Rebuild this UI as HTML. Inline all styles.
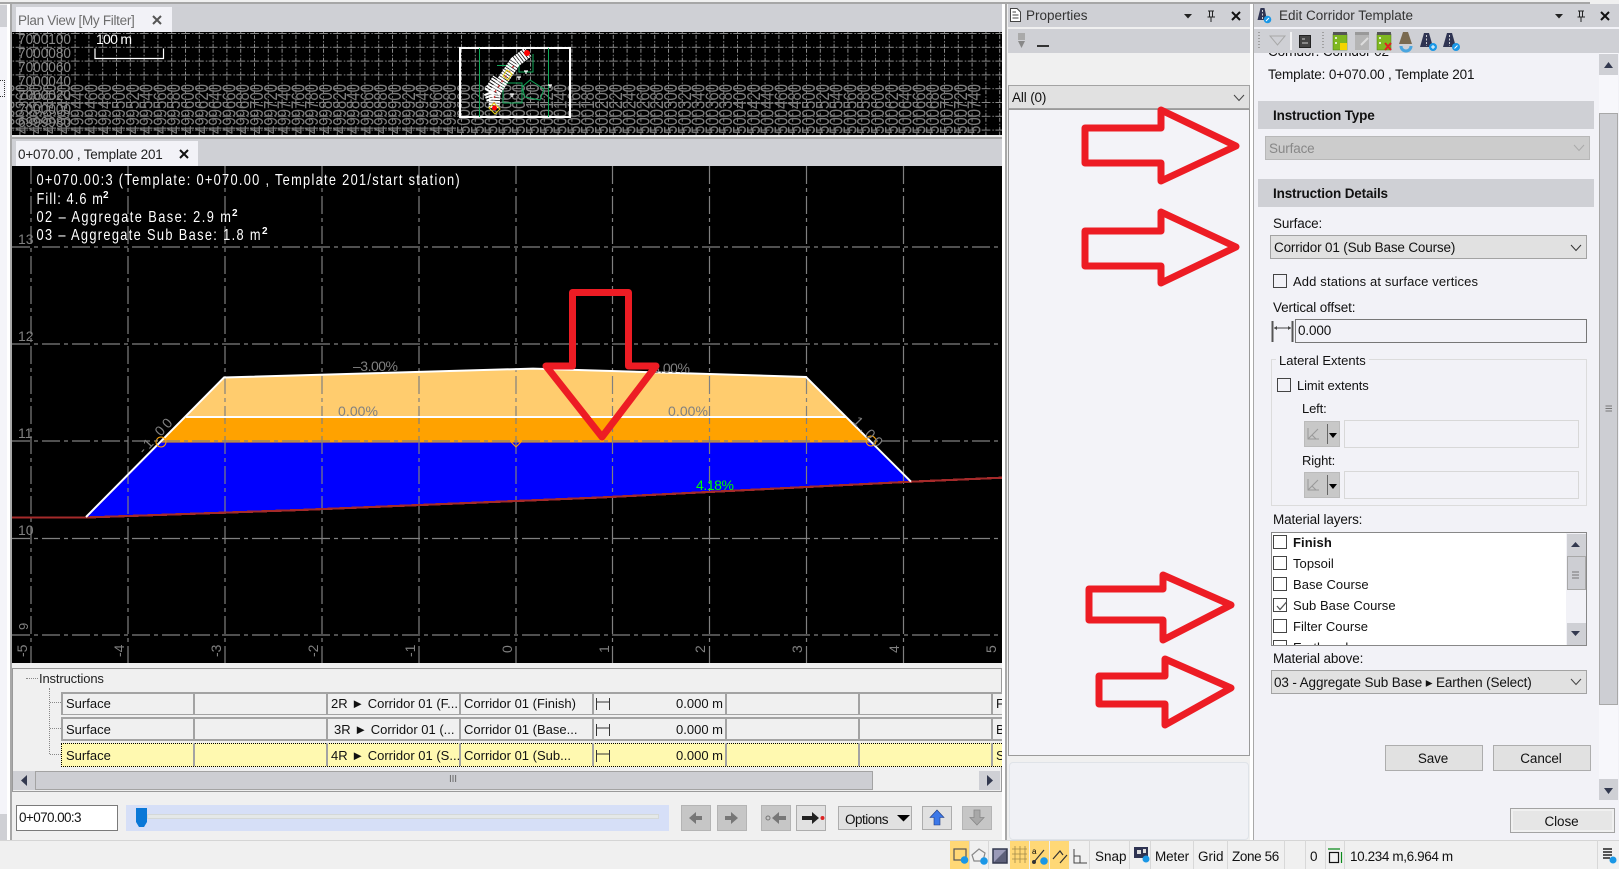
<!DOCTYPE html>
<html><head><meta charset="utf-8"><style>
*{box-sizing:border-box}
html,body{margin:0;padding:0}
body{width:1619px;height:869px;overflow:hidden;position:relative;background:#f0f0f0;font-family:"Liberation Sans",sans-serif;font-size:13.5px;color:#111}
.b{position:absolute}
.t{position:absolute;white-space:nowrap;line-height:16px;letter-spacing:-.14px}
.hd{position:absolute;background:#cfd0d5;font-weight:bold;font-size:13.5px;line-height:30px;padding-left:15px;color:#111;letter-spacing:-.15px}
.cb{position:absolute;background:#e1e1e1;border:1px solid #a3a3a3;line-height:24px;padding-left:3px;white-space:nowrap;letter-spacing:-.14px}
.ck{position:absolute;width:14px;height:14px;border:1px solid #444;background:#fff}
.btn{position:absolute;background:#e1e1e1;border:1px solid #adadad;text-align:center;line-height:26px;letter-spacing:-.1px;padding-right:2px}
.sq{position:absolute;background:#c6c6c6;border:1px solid #b4b4b4}
.row{position:absolute;left:61px;width:941px;height:24px;background:#f0f0f0;border:2px solid #a3a3a3;border-right:0}
.v{position:absolute;top:692px;width:2px;background:#a3a3a3}
.rt{position:absolute;white-space:nowrap;line-height:16px;font-size:13px}
.sep{position:absolute;top:840px;height:29px;width:1px;background:#d8d8d8}
.y{position:absolute;top:841px;height:28px;width:19px;background:#ffd876}
svg{position:absolute;overflow:visible}
svg text{font-family:"Liberation Sans",sans-serif}
.lst{font-size:13px;letter-spacing:.05px}
.st{letter-spacing:-.38px}
</style></head><body>

<!-- top line and backgrounds -->
<div class="b" style="left:0;top:2px;width:1590px;height:2px;background:#a6a6a6"></div>
<div class="b" style="left:0;top:5px;width:7px;height:22px;background:#cfd0d5"></div>
<div class="b" style="left:0;top:27px;width:7px;height:787px;background:#f4f4f9"></div>
<div class="b" style="left:0;top:814px;width:7px;height:26px;background:#cfd0d5"></div>
<div class="b" style="left:7px;top:4px;width:3px;height:836px;background:#fff"></div>
<div class="b" style="left:10px;top:4px;width:2px;height:836px;background:#a8a8a8"></div>
<div class="b" style="left:0;top:80px;width:5px;height:17px;border:1px dotted #333;border-left:0"></div>

<!-- plan tab strip -->
<div class="b" style="left:12px;top:4px;width:990px;height:28px;background:#cfd0d5"></div>
<div class="b" style="left:16px;top:7px;width:156px;height:25px;background:#f2f2f7"></div>
<div class="t" style="left:18px;top:13px;color:#6d6d6d;font-size:13.5px;letter-spacing:-.3px">Plan View [My Filter]</div>
<svg style="left:152px;top:15px" width="10" height="10"><path d="M1 1L9 9M9 1L1 9" stroke="#555" stroke-width="2"/></svg>

<!-- plan canvas -->
<svg style="left:12px;top:32px;overflow:hidden" width="990" height="103" viewBox="12 32 990 103">
<defs><pattern id="g" x="5.6" y="33" width="13.8" height="13.8" patternUnits="userSpaceOnUse">
<path d="M0 .5H5M7 .5H8.5M10 .5H13.8M.5 2V6M.5 8V9.5M.5 11V13.8" stroke="#8a8a8a" stroke-width="1" fill="none"/></pattern></defs>
<rect x="12" y="32" width="990" height="103" fill="#000"/>
<rect x="12" y="32" width="990" height="103" fill="url(#g)"/>
<g fill="#7c7c7c" font-size="18">
<text transform="translate(14.6,134) rotate(-90)" textLength="50" lengthAdjust="spacingAndGlyphs">499340</text>
<text transform="translate(28.4,134) rotate(-90)" textLength="50" lengthAdjust="spacingAndGlyphs">499360</text>
<text transform="translate(42.2,134) rotate(-90)" textLength="50" lengthAdjust="spacingAndGlyphs">499380</text>
<text transform="translate(56,134) rotate(-90)" textLength="50" lengthAdjust="spacingAndGlyphs">499400</text>
<text transform="translate(69.8,134) rotate(-90)" textLength="50" lengthAdjust="spacingAndGlyphs">499420</text>
<text transform="translate(83.6,134) rotate(-90)" textLength="50" lengthAdjust="spacingAndGlyphs">499440</text>
<text transform="translate(97.4,134) rotate(-90)" textLength="50" lengthAdjust="spacingAndGlyphs">499460</text>
<text transform="translate(111.2,134) rotate(-90)" textLength="50" lengthAdjust="spacingAndGlyphs">499480</text>
<text transform="translate(125,134) rotate(-90)" textLength="50" lengthAdjust="spacingAndGlyphs">499500</text>
<text transform="translate(138.8,134) rotate(-90)" textLength="50" lengthAdjust="spacingAndGlyphs">499520</text>
<text transform="translate(152.6,134) rotate(-90)" textLength="50" lengthAdjust="spacingAndGlyphs">499540</text>
<text transform="translate(166.4,134) rotate(-90)" textLength="50" lengthAdjust="spacingAndGlyphs">499560</text>
<text transform="translate(180.2,134) rotate(-90)" textLength="50" lengthAdjust="spacingAndGlyphs">499580</text>
<text transform="translate(194,134) rotate(-90)" textLength="50" lengthAdjust="spacingAndGlyphs">499600</text>
<text transform="translate(207.8,134) rotate(-90)" textLength="50" lengthAdjust="spacingAndGlyphs">499620</text>
<text transform="translate(221.6,134) rotate(-90)" textLength="50" lengthAdjust="spacingAndGlyphs">499640</text>
<text transform="translate(235.4,134) rotate(-90)" textLength="50" lengthAdjust="spacingAndGlyphs">499660</text>
<text transform="translate(249.2,134) rotate(-90)" textLength="50" lengthAdjust="spacingAndGlyphs">499680</text>
<text transform="translate(263,134) rotate(-90)" textLength="50" lengthAdjust="spacingAndGlyphs">499700</text>
<text transform="translate(276.8,134) rotate(-90)" textLength="50" lengthAdjust="spacingAndGlyphs">499720</text>
<text transform="translate(290.6,134) rotate(-90)" textLength="50" lengthAdjust="spacingAndGlyphs">499740</text>
<text transform="translate(304.4,134) rotate(-90)" textLength="50" lengthAdjust="spacingAndGlyphs">499760</text>
<text transform="translate(318.2,134) rotate(-90)" textLength="50" lengthAdjust="spacingAndGlyphs">499780</text>
<text transform="translate(332,134) rotate(-90)" textLength="50" lengthAdjust="spacingAndGlyphs">499800</text>
<text transform="translate(345.8,134) rotate(-90)" textLength="50" lengthAdjust="spacingAndGlyphs">499820</text>
<text transform="translate(359.6,134) rotate(-90)" textLength="50" lengthAdjust="spacingAndGlyphs">499840</text>
<text transform="translate(373.4,134) rotate(-90)" textLength="50" lengthAdjust="spacingAndGlyphs">499860</text>
<text transform="translate(387.2,134) rotate(-90)" textLength="50" lengthAdjust="spacingAndGlyphs">499880</text>
<text transform="translate(401,134) rotate(-90)" textLength="50" lengthAdjust="spacingAndGlyphs">499900</text>
<text transform="translate(414.8,134) rotate(-90)" textLength="50" lengthAdjust="spacingAndGlyphs">499920</text>
<text transform="translate(428.6,134) rotate(-90)" textLength="50" lengthAdjust="spacingAndGlyphs">499940</text>
<text transform="translate(442.4,134) rotate(-90)" textLength="50" lengthAdjust="spacingAndGlyphs">499960</text>
<text transform="translate(456.2,134) rotate(-90)" textLength="50" lengthAdjust="spacingAndGlyphs">499980</text>
<text transform="translate(470,134) rotate(-90)" textLength="50" lengthAdjust="spacingAndGlyphs">500000</text>
<text transform="translate(483.8,134) rotate(-90)" textLength="50" lengthAdjust="spacingAndGlyphs">500020</text>
<text transform="translate(497.6,134) rotate(-90)" textLength="50" lengthAdjust="spacingAndGlyphs">500040</text>
<text transform="translate(511.4,134) rotate(-90)" textLength="50" lengthAdjust="spacingAndGlyphs">500060</text>
<text transform="translate(525.2,134) rotate(-90)" textLength="50" lengthAdjust="spacingAndGlyphs">500080</text>
<text transform="translate(539,134) rotate(-90)" textLength="50" lengthAdjust="spacingAndGlyphs">500100</text>
<text transform="translate(552.8,134) rotate(-90)" textLength="50" lengthAdjust="spacingAndGlyphs">500120</text>
<text transform="translate(566.6,134) rotate(-90)" textLength="50" lengthAdjust="spacingAndGlyphs">500140</text>
<text transform="translate(580.4,134) rotate(-90)" textLength="50" lengthAdjust="spacingAndGlyphs">500160</text>
<text transform="translate(594.2,134) rotate(-90)" textLength="50" lengthAdjust="spacingAndGlyphs">500180</text>
<text transform="translate(608,134) rotate(-90)" textLength="50" lengthAdjust="spacingAndGlyphs">500200</text>
<text transform="translate(621.8,134) rotate(-90)" textLength="50" lengthAdjust="spacingAndGlyphs">500220</text>
<text transform="translate(635.6,134) rotate(-90)" textLength="50" lengthAdjust="spacingAndGlyphs">500240</text>
<text transform="translate(649.4,134) rotate(-90)" textLength="50" lengthAdjust="spacingAndGlyphs">500260</text>
<text transform="translate(663.2,134) rotate(-90)" textLength="50" lengthAdjust="spacingAndGlyphs">500280</text>
<text transform="translate(677,134) rotate(-90)" textLength="50" lengthAdjust="spacingAndGlyphs">500300</text>
<text transform="translate(690.8,134) rotate(-90)" textLength="50" lengthAdjust="spacingAndGlyphs">500320</text>
<text transform="translate(704.6,134) rotate(-90)" textLength="50" lengthAdjust="spacingAndGlyphs">500340</text>
<text transform="translate(718.4,134) rotate(-90)" textLength="50" lengthAdjust="spacingAndGlyphs">500360</text>
<text transform="translate(732.2,134) rotate(-90)" textLength="50" lengthAdjust="spacingAndGlyphs">500380</text>
<text transform="translate(746,134) rotate(-90)" textLength="50" lengthAdjust="spacingAndGlyphs">500400</text>
<text transform="translate(759.8,134) rotate(-90)" textLength="50" lengthAdjust="spacingAndGlyphs">500420</text>
<text transform="translate(773.6,134) rotate(-90)" textLength="50" lengthAdjust="spacingAndGlyphs">500440</text>
<text transform="translate(787.4,134) rotate(-90)" textLength="50" lengthAdjust="spacingAndGlyphs">500460</text>
<text transform="translate(801.2,134) rotate(-90)" textLength="50" lengthAdjust="spacingAndGlyphs">500480</text>
<text transform="translate(815,134) rotate(-90)" textLength="50" lengthAdjust="spacingAndGlyphs">500500</text>
<text transform="translate(828.8,134) rotate(-90)" textLength="50" lengthAdjust="spacingAndGlyphs">500520</text>
<text transform="translate(842.6,134) rotate(-90)" textLength="50" lengthAdjust="spacingAndGlyphs">500540</text>
<text transform="translate(856.4,134) rotate(-90)" textLength="50" lengthAdjust="spacingAndGlyphs">500560</text>
<text transform="translate(870.2,134) rotate(-90)" textLength="50" lengthAdjust="spacingAndGlyphs">500580</text>
<text transform="translate(884,134) rotate(-90)" textLength="50" lengthAdjust="spacingAndGlyphs">500600</text>
<text transform="translate(897.8,134) rotate(-90)" textLength="50" lengthAdjust="spacingAndGlyphs">500620</text>
<text transform="translate(911.6,134) rotate(-90)" textLength="50" lengthAdjust="spacingAndGlyphs">500640</text>
<text transform="translate(925.4,134) rotate(-90)" textLength="50" lengthAdjust="spacingAndGlyphs">500660</text>
<text transform="translate(939.2,134) rotate(-90)" textLength="50" lengthAdjust="spacingAndGlyphs">500680</text>
<text transform="translate(953,134) rotate(-90)" textLength="50" lengthAdjust="spacingAndGlyphs">500700</text>
<text transform="translate(966.8,134) rotate(-90)" textLength="50" lengthAdjust="spacingAndGlyphs">500720</text>
<text transform="translate(980.6,134) rotate(-90)" textLength="50" lengthAdjust="spacingAndGlyphs">500740</text>
</g>
<g fill="#8a8a8a" font-size="15">
<text x="18" y="44" textLength="53" lengthAdjust="spacingAndGlyphs">7000100</text>
<text x="18" y="58" textLength="53" lengthAdjust="spacingAndGlyphs">7000080</text>
<text x="18" y="72" textLength="53" lengthAdjust="spacingAndGlyphs">7000060</text>
<text x="18" y="86" textLength="53" lengthAdjust="spacingAndGlyphs">7000040</text>
<text x="18" y="100" textLength="53" lengthAdjust="spacingAndGlyphs">7000020</text>
<text x="18" y="114" textLength="53" lengthAdjust="spacingAndGlyphs">7000000</text>
<text x="18" y="127" textLength="53" lengthAdjust="spacingAndGlyphs">6999980</text>
</g>
<!-- scale bar -->
<path d="M95 48.5V58.5H163.5V48.5" fill="none" stroke="#fff" stroke-width="1.2"/>
<text x="96" y="44" fill="#fff" font-size="14" textLength="36" lengthAdjust="spacing">100 m</text>
<!-- mini map -->
<rect x="460" y="48" width="110" height="69" fill="none" stroke="#fff" stroke-width="2"/>
<g fill="none" stroke="#10a858" stroke-width="1">
<path d="M479.500 48V117M548.500 48V117"/>
<path d="M503 83H522V103H503Z"/>
<path d="M497 65.500H510V76M519 62V72H533V54"/>
<path d="M530 80L544 89L540 100L525 97L522 87Z"/>
</g>
<path d="M494 108L495 93L503 80L515 62L528 52" fill="none" stroke="#fff" stroke-width="11" stroke-dasharray="2 .7"/>
<path d="M491 100L488 92L497 78" fill="none" stroke="#fff" stroke-width="9" stroke-dasharray="2 1"/>
<path d="M494 104L495 92L503 80L516 63" fill="none" stroke="#c33" stroke-width="1.500" stroke-dasharray="2 4"/>
<path d="M494 103L500 109L495 114L489 108Z M507 70L512 74L508 80L503 76Z" fill="none" stroke="#e6d21a" stroke-width="1"/>
<circle cx="494.500" cy="108" r="2.500" fill="#f00"/><circle cx="527" cy="53" r="3" fill="#f00"/>
<path d="M524 71H528M526 71V74M548 85H552M550 85V88M510 94H514M512 94V97M517 77H521M519 77V80" stroke="#fff" stroke-width="1.200"/>
</svg>

<!-- splitter -->
<div class="b" style="left:12px;top:135px;width:990px;height:2px;background:#e8e8e8"></div>
<div class="b" style="left:12px;top:137px;width:990px;height:2px;background:#a8a8a8"></div>
<div class="b" style="left:12px;top:139px;width:990px;height:27px;background:#cfd0d5"></div>
<div class="b" style="left:16px;top:141px;width:182px;height:25px;background:#f2f2f7"></div>
<div class="t" style="left:18px;top:147px;font-size:13.5px;color:#222;letter-spacing:-.18px">0+070.00 , Template 201</div>
<svg style="left:179px;top:149px" width="10" height="10"><path d="M1 1L9 9M9 1L1 9" stroke="#111" stroke-width="2"/></svg>

<!-- section canvas -->
<svg style="left:12px;top:166px;overflow:hidden" width="990" height="497" viewBox="12 166 990 497">
<rect x="12" y="166" width="990" height="497" fill="#000"/>
<!-- fills -->
<path d="M86 517L160 442.500H870L911 481.700L600 497.500L300 510Z" fill="#0000ff"/>
<path d="M160 442.500L186 417H846L870 442.500Z" fill="#ffa200"/>
<path d="M186 417L224 377.500L533 368.600L806 377L846 417Z" fill="#ffcc6e"/>
<!-- grid -->
<g stroke="#808080" stroke-width="1.200" stroke-dasharray="18 4 4 4" fill="none">
<path d="M31 166V663M128 166V663M225 166V663M322 166V663M419 166V663M516 166V663M612.500 166V663M709.500 166V663M806.500 166V663M903.500 166V663"/>
<path d="M12 247H1002M12 344H1002M12 441H1002M12 538.500H1002M12 635H1002"/>
</g>
<!-- lines -->
<path d="M12 517.500L86 517.500L300 510L600 497.500L911 481.700L1002 477.700" fill="none" stroke="#a52a2a" stroke-width="2.200" shape-rendering="crispEdges"/>
<path d="M86 517L224 377.500L533 368.600L806 377L911 481.700" fill="none" stroke="#fff" stroke-width="2"/>
<path d="M186 417H846" stroke="#fff" stroke-width="2"/>
<g fill="none" stroke="#ffa200" stroke-width="1"><circle cx="161" cy="442" r="5"/><circle cx="871" cy="441" r="5"/><path d="M511 442L516 447L521 442"/></g>
<!-- labels -->
<g fill="#fff" font-size="16">
<text transform="translate(36.500,185) scale(.8,1)" textLength="529" lengthAdjust="spacing">0+070.00:3 (Template: 0+070.00 , Template 201/start station)</text>
<text transform="translate(36.500,204) scale(.8,1)" textLength="83" lengthAdjust="spacing">Fill: 4.6 m</text>
<text x="103" y="198" font-size="10" font-weight="bold">2</text>
<text transform="translate(36.500,222) scale(.8,1)" textLength="243" lengthAdjust="spacing">02 – Aggregate Base: 2.9 m</text>
<text x="232" y="216" font-size="10" font-weight="bold">2</text>
<text transform="translate(36.500,240) scale(.8,1)" textLength="280" lengthAdjust="spacing">03 – Aggregate Sub Base: 1.8 m</text>
<text x="262" y="234" font-size="10" font-weight="bold">2</text>
</g>
<g fill="#808080" font-size="14">
<text x="18" y="244">13</text><text x="18" y="341">12</text><text x="18" y="438">11</text><text x="18" y="535">10</text>
<text transform="translate(28,630) rotate(-90)" font-size="13">9</text>
<text transform="translate(27,657) rotate(-90)">-5</text>
<text transform="translate(124,657) rotate(-90)">-4</text>
<text transform="translate(221,657) rotate(-90)">-3</text>
<text transform="translate(318,657) rotate(-90)">-2</text>
<text transform="translate(415,657) rotate(-90)">-1</text>
<text transform="translate(512,653) rotate(-90)">0</text>
<text transform="translate(609,653) rotate(-90)">1</text>
<text transform="translate(705,653) rotate(-90)">2</text>
<text transform="translate(802,653) rotate(-90)">3</text>
<text transform="translate(899,653) rotate(-90)">4</text>
<text transform="translate(996,653) rotate(-90)">5</text>
<text x="353" y="371" textLength="45" lengthAdjust="spacing">–3.00%</text>
<text x="652" y="373" textLength="38" lengthAdjust="spacing">3.00%</text>
<text x="338" y="416" textLength="40" lengthAdjust="spacing">0.00%</text>
<text x="668" y="416" textLength="40" lengthAdjust="spacing">0.00%</text>
<text transform="translate(144,455) rotate(-47)" textLength="43" lengthAdjust="spacing">-1.00</text>
<text transform="translate(852,422) rotate(46)" textLength="36" lengthAdjust="spacing">1.00</text>
</g>
<text x="696" y="490" fill="#00ff00" font-size="14" textLength="38" lengthAdjust="spacing">4.18%</text>
</svg>

<!-- instructions panel -->
<div class="b" style="left:12px;top:663px;width:990px;height:5px;background:#f0f0f0"></div>
<div class="b" style="left:12px;top:668px;width:990px;height:124px;border:1px solid #9a9a9a;background:#f0f0f0"></div>
<div class="t" style="left:39px;top:671px;font-size:13px;color:#222">Instructions</div>
<div class="b" style="left:26px;top:678px;width:12px;border-top:1px dotted #888"></div>
<div class="b" style="left:49px;top:688px;height:66px;border-left:1px dotted #888"></div>
<div class="b" style="left:50px;top:702px;width:11px;border-top:1px dotted #888"></div>
<div class="b" style="left:50px;top:728px;width:11px;border-top:1px dotted #888"></div>
<div class="b" style="left:50px;top:754px;width:11px;border-top:1px dotted #888"></div>
<div class="row" style="top:692px"></div>
<div class="row" style="top:717px"></div>
<div class="row" style="top:743px;background:#fff9b0;border:1px dotted #000;border-right:0"></div>
<div class="v" style="left:193px;height:74px"></div><div class="v" style="left:326px;height:74px"></div><div class="v" style="left:459px;height:74px"></div><div class="v" style="left:592px;height:74px"></div><div class="v" style="left:725px;height:74px"></div><div class="v" style="left:858px;height:74px"></div><div class="v" style="left:991px;height:74px"></div>
<div class="b" style="left:61px;top:715px;width:941px;height:2px;background:#f0f0f0"></div>
<div class="b" style="left:61px;top:741px;width:941px;height:2px;background:#f0f0f0"></div>

<div class="rt" style="left:66px;top:696px">Surface</div><div class="rt" style="left:66px;top:722px">Surface</div><div class="rt" style="left:66px;top:748px">Surface</div>
<div class="rt" style="left:331px;top:696px">2R ► Corridor 01 (F...</div>
<div class="rt" style="left:334px;top:722px">3R ► Corridor 01 (...</div>
<div class="rt" style="left:331px;top:748px">4R ► Corridor 01 (S...</div>
<div class="rt" style="left:464px;top:696px">Corridor 01 (Finish)</div>
<div class="rt" style="left:464px;top:722px">Corridor 01 (Base...</div>
<div class="rt" style="left:464px;top:748px">Corridor 01 (Sub...</div>
<div class="rt" style="right:896px;top:696px">0.000 m</div><div class="rt" style="right:896px;top:722px">0.000 m</div><div class="rt" style="right:896px;top:748px">0.000 m</div>
<div class="rt" style="left:996px;top:696px;width:6px;overflow:hidden">F</div><div class="rt" style="left:996px;top:722px;width:6px;overflow:hidden">B</div><div class="rt" style="left:996px;top:748px;width:6px;overflow:hidden">S</div>
<svg style="left:595px;top:696px" width="16" height="64"><g fill="none" stroke="#333" stroke-width="1"><path d="M1.500 2V14M14.500 2V14M2 6H14M1.500 28V40M14.500 28V40M2 32H14M1.500 54V66M14.500 54V66M2 58H14"/></g></svg>

<!-- h scrollbar -->
<div class="b" style="left:13px;top:771px;width:22px;height:19px;background:#cfd0d5"></div>
<svg style="left:21px;top:775px" width="6" height="11"><path d="M6 0V11L0 5.500Z" fill="#33394f"/></svg>
<div class="b" style="left:35px;top:771px;width:838px;height:19px;background:#cdced3;border:1px solid #a3a3a3"></div>
<div class="t" style="left:449px;top:772px;color:#666;font-size:10px">III</div>
<div class="b" style="left:979px;top:771px;width:21px;height:19px;background:#cfd0d5"></div>
<svg style="left:987px;top:775px" width="6" height="11"><path d="M0 0V11L6 5.500Z" fill="#33394f"/></svg>

<!-- bottom controls -->
<div class="b" style="left:16px;top:805px;width:102px;height:26px;background:#fff;border:1px solid #7a7a7a;padding-left:2px;line-height:23px;font-size:13.5px;letter-spacing:-.6px">0+070.00:3</div>
<div class="b" style="left:126px;top:805px;width:543px;height:26px;background:#d6dff7"></div>
<div class="b" style="left:147px;top:814px;width:512px;height:5px;background:#e4e8e8;border:1px solid #d4d8d8"></div>
<svg style="left:136px;top:808px" width="12" height="20"><path d="M0 0H11V14L8 19H3L0 14Z" fill="#0a78d7"/></svg>
<div class="sq" style="left:681px;top:805px;width:30px;height:26px"></div>
<div class="sq" style="left:717px;top:805px;width:30px;height:26px"></div>
<div class="sq" style="left:761px;top:805px;width:30px;height:26px"></div>
<div class="sq" style="left:796px;top:805px;width:30px;height:26px;background:#e1e1e1;border-color:#adadad"></div>
<svg style="left:681px;top:805px" width="150" height="26">
<path d="M8 13L15 7V11H21V15H15V19Z" fill="#777"/>
<path d="M57 13L50 7V11H44V15H50V19Z" fill="#777"/>
<path d="M91 13L98 7V11H105V15H98V19Z" fill="#777"/><circle cx="87" cy="13" r="2" fill="none" stroke="#777"/>
<path d="M138 13L131 7V11H121V15H131V19Z" fill="#222"/><circle cx="141.500" cy="13" r="2" fill="#d22"/>
</svg>
<div class="btn" style="left:838px;top:806px;width:74px;height:24px;line-height:25px;text-align:left;padding-left:6px;font-size:13.5px;letter-spacing:-.5px">Options</div>
<svg style="left:897px;top:815px" width="11" height="7"><path d="M0 0H13L6.500 6.500Z" fill="#000"/></svg>
<div class="btn" style="left:922px;top:806px;width:30px;height:24px"></div>
<svg style="left:929px;top:810px" width="16" height="16"><path d="M8 0L15 7.500H11V15H5V7.500H1Z" fill="#3c78e8" stroke="#1d3a80" stroke-width=".6"/></svg>
<div class="sq" style="left:962px;top:806px;width:30px;height:24px"></div>
<svg style="left:969px;top:810px" width="16" height="16"><path d="M8 15L15 7.500H11V0H5V7.500H1Z" fill="#a8a8a8" stroke="#888" stroke-width=".8"/></svg>

<!-- properties panel -->
<div class="b" style="left:1002px;top:4px;width:3px;height:836px;background:#fff"></div>
<div class="b" style="left:1005px;top:4px;width:2px;height:836px;background:#a8a8a8"></div>
<div class="b" style="left:1008px;top:4px;width:242px;height:23px;background:#cfd0d5"></div>
<div class="b" style="left:1008px;top:29px;width:242px;height:24px;background:#cfd0d5"></div>
<svg style="left:1010px;top:8px" width="11" height="14"><path d="M.5.5H7L10.500 4V13.500H.5Z M2.500 4H6M2.500 7H8.500M2.500 10H8.500" fill="#fff" stroke="#444" stroke-width="1"/></svg>
<div class="t" style="left:1026px;top:8px;font-size:13.5px;color:#333;letter-spacing:0">Properties</div>
<svg style="left:1183px;top:10px" width="60" height="12"><path d="M1 4H9L5 8.500Z" fill="#222"/><path d="M25 1H31M26.500 1V7H29.500V1M24.500 7H32M28 7V12" stroke="#222" fill="none"/><path d="M49 2L57 10M57 2L49 10" stroke="#111" stroke-width="2"/></svg>
<svg style="left:1017px;top:33px" width="36" height="17"><path d="M1 0H8V7H1Z" fill="#aaa"/><path d="M1 8H8L4.500 15Z" fill="#888"/><path d="M20 13H32" stroke="#333" stroke-width="2"/></svg>
<div class="b" style="left:1008px;top:53px;width:242px;height:32px;background:#f0f0f0"></div>
<div class="cb" style="left:1008px;top:85px;width:242px;height:24px;padding-left:3px;font-size:13.5px">All (0)</div>
<svg style="left:1233px;top:94px" width="12" height="8"><path d="M1 1L6 6.500L11 1" fill="none" stroke="#444"/></svg>
<div class="b" style="left:1008px;top:109px;width:242px;height:647px;background:#f3f3f8;border:1px solid #9a9a9a"></div>
<div class="b" style="left:1009px;top:762px;width:240px;height:78px;background:#f0f1f5;border:1px solid #dfe3e8;border-radius:4px"></div>

<!-- edit panel -->
<div class="b" style="left:1250px;top:4px;width:3px;height:836px;background:#fff"></div>
<div class="b" style="left:1253px;top:4px;width:1px;height:836px;background:#a8a8a8"></div>
<div class="b" style="left:1254px;top:53px;width:365px;height:787px;background:#f2f2f7"></div>
<div class="b" style="left:1254px;top:4px;width:365px;height:23px;background:#cfd0d5"></div>
<div class="b" style="left:1254px;top:27px;width:365px;height:2px;background:#f2f2f7"></div>
<div class="b" style="left:1254px;top:29px;width:365px;height:24px;background:#cfd0d5"></div>
<svg style="left:1256px;top:7px" width="16" height="18"><path d="M4.500 1H8.500L11 13H1.500Z" fill="#2f3452"/><path d="M6.500 3V12" stroke="#cfd0d5" stroke-dasharray="2 1.500"/><circle cx="11.500" cy="12.500" r="3.800" fill="#1a97e6"/><path d="M10 14L13 11" stroke="#fff"/></svg>
<div class="t" style="left:1279px;top:8px;font-size:13.5px;color:#333;letter-spacing:0">Edit Corridor Template</div>
<svg style="left:1554px;top:10px" width="60" height="12"><path d="M1 4H9L5 8.500Z" fill="#222"/><path d="M24 1H30M25.500 1V7H28.500V1M23.500 7H31M27 7V12" stroke="#222" fill="none"/><path d="M47 2L55 10M55 2L47 10" stroke="#111" stroke-width="2"/></svg>
<svg style="left:1256px;top:30px" width="206" height="22">
<path d="M3 2V20M67 2V20" stroke="#a0a0a0" stroke-dasharray="1 2" stroke-width="2"/>
<path d="M14 6H29L21.500 15Z" fill="none" stroke="#a8a8a8"/>
<path d="M35 2V20" stroke="#fff" stroke-width="1.500"/>
<rect x="43.500" y="5.500" width="11" height="12" fill="#444" stroke="#222"/><path d="M46 9H49M46 13H52" stroke="#ccc"/>
<rect x="77" y="4" width="14" height="16" fill="#7fb820" stroke="#4d7a10" stroke-width=".5"/><rect x="77" y="2" width="14" height="3" fill="#555"/><path d="M79 8H81M79 13H81" stroke="#fff" stroke-width="1.500"/><rect x="84" y="13" width="7" height="7" fill="#f4d400"/>
<rect x="99" y="4" width="14" height="16" fill="#b5b5b5"/><rect x="99" y="2" width="14" height="3" fill="#999"/><path d="M105 15L112 8" stroke="#ddd" stroke-width="2"/>
<rect x="121" y="4" width="14" height="16" fill="#7fb820" stroke="#4d7a10" stroke-width=".5"/><rect x="121" y="2" width="14" height="3" fill="#555"/><path d="M123 8H125M123 13H125" stroke="#fff" stroke-width="1.500"/><path d="M129 13L135 20M135 13L129 20" stroke="#d22" stroke-width="2"/>
<path d="M147 2H152L156 14H143Z" fill="#7a6a50"/><path d="M145 14A5 5 0 0 0 155 14" fill="none" stroke="#49a5df" stroke-width="3" transform="translate(0 2)"/>
<path d="M168 3H173L177 17H164Z" fill="#2f3452"/><path d="M170.500 5V16" stroke="#cfd0d5" stroke-dasharray="2 1.500"/><circle cx="177" cy="17" r="4" fill="#1a97e6"/><path d="M175 17H179M177 15V19" stroke="#fff"/>
<path d="M191 3H196L200 17H187Z" fill="#2f3452"/><path d="M193.500 5V16" stroke="#cfd0d5" stroke-dasharray="2 1.500"/><circle cx="200" cy="17" r="4" fill="#1a97e6"/><path d="M198.500 18.500L201.500 15.500" stroke="#fff"/>
</svg>

<div class="b" style="left:1254px;top:53px;width:345px;height:6px;overflow:hidden"><div class="t" style="left:14px;top:-9px;font-size:13.5px">Corridor: Corridor 02</div></div>
<div class="t" style="left:1268px;top:67px;font-size:13.5px">Template: 0+070.00 , Template 201</div>
<div class="hd" style="left:1258px;top:101px;width:336px;height:28px">Instruction Type</div>
<div class="cb" style="left:1265px;top:136px;width:325px;height:24px;background:#ccc;border-color:#b8b8b8;color:#888;font-size:13.5px">Surface</div>
<svg style="left:1573px;top:144px" width="12" height="8"><path d="M1 1L6 6.500L11 1" fill="none" stroke="#aaa"/></svg>
<div class="hd" style="left:1258px;top:179px;width:336px;height:28px">Instruction Details</div>
<div class="t" style="left:1273px;top:216px;font-size:13.5px">Surface:</div>
<div class="cb" style="left:1270px;top:235px;width:317px;height:24px;font-size:13.5px;letter-spacing:-.17px">Corridor 01 (Sub Base Course)</div>
<svg style="left:1570px;top:244px" width="12" height="8"><path d="M1 1L6 6.500L11 1" fill="none" stroke="#333"/></svg>
<div class="ck" style="left:1273px;top:274px;background:#f2f2f7"></div>
<div class="t" style="left:1293px;top:274px;font-size:13px;letter-spacing:.14px">Add stations at surface vertices</div>
<div class="t" style="left:1273px;top:300px;font-size:13.5px">Vertical offset:</div>
<svg style="left:1271px;top:320px" width="23" height="23"><path d="M1.500 1V22M21.500 1V22" stroke="#555" stroke-width="2"/><path d="M3 8H20" stroke="#444"/><path d="M3 8L6 6V10ZM20 8L17 6V10Z" fill="#444"/></svg>
<div class="b" style="left:1295px;top:319px;width:292px;height:24px;background:#f2f2f7;border:1px solid #777;padding-left:2px;line-height:22px;font-size:13.5px;letter-spacing:-.14px">0.000</div>

<div class="b" style="left:1271px;top:359px;width:316px;height:147px;border:1px solid #dcdcdc"></div>
<div class="t" style="left:1276px;top:353px;background:#f2f2f7;padding:0 3px;font-size:13px;letter-spacing:0">Lateral Extents</div>
<div class="ck" style="left:1277px;top:378px;background:#f2f2f7"></div>
<div class="t" style="left:1297px;top:378px;font-size:13px;letter-spacing:-.1px">Limit extents</div>
<div class="t" style="left:1302px;top:401px;font-size:13px">Left:</div>
<div class="t" style="left:1302px;top:453px;font-size:13px">Right:</div>
<div class="b" style="left:1304px;top:421px;width:36px;height:26px;background:#c8c8c8;border:1px solid #bbb"></div>
<div class="b" style="left:1344px;top:420px;width:235px;height:28px;background:#f2f2f7;border:1px solid #d8d8d8"></div>
<div class="b" style="left:1304px;top:472px;width:36px;height:26px;background:#c8c8c8;border:1px solid #bbb"></div>
<div class="b" style="left:1344px;top:471px;width:235px;height:28px;background:#f2f2f7;border:1px solid #d8d8d8"></div>
<svg style="left:1304px;top:421px" width="36" height="78"><g fill="none" stroke="#999"><path d="M4 7V18H15M4 18L14 8M8 14L12 18"/><path d="M4 58V69H15M4 69L14 59M8 65L12 69"/></g><path d="M23.500 3V23M23.500 54V74" stroke="#666"/><path d="M25 12H33L29 17ZM25 63H33L29 68Z" fill="#000"/></svg>

<div class="t" style="left:1273px;top:512px;font-size:13.5px">Material layers:</div>
<div class="b" style="left:1271px;top:532px;width:316px;height:114px;background:#fff;border:1px solid #888;overflow:hidden">
<div class="ck" style="left:1px;top:2px"></div><div class="t lst" style="left:21px;top:2px;font-weight:bold;letter-spacing:.1px">Finish</div>
<div class="ck" style="left:1px;top:23px"></div><div class="t lst" style="left:21px;top:23px">Topsoil</div>
<div class="ck" style="left:1px;top:44px"></div><div class="t lst" style="left:21px;top:44px">Base Course</div>
<div class="ck" style="left:1px;top:65px"></div><div class="t lst" style="left:21px;top:65px">Sub Base Course</div>
<svg style="left:4px;top:68px" width="12" height="10"><path d="M1 5L4 8.500L10.500 1" fill="none" stroke="#555" stroke-width="1.300"/></svg>
<div class="ck" style="left:1px;top:86px"></div><div class="t lst" style="left:21px;top:86px">Filter Course</div>
<div class="ck" style="left:1px;top:107px"></div><div class="t lst" style="left:21px;top:107px">Earthwork</div>
<div class="b" style="left:294px;top:0;width:20px;height:112px;background:#f2f2f7"></div>
<div class="b" style="left:295px;top:1px;width:19px;height:22px;background:#cfd0d5"></div>
<div class="b" style="left:295px;top:23px;width:19px;height:34px;background:#cdced3;border:1px solid #a8a8a8"></div>
<div class="b" style="left:295px;top:90px;width:19px;height:22px;background:#cfd0d5"></div>
<svg style="left:298px;top:8px" width="14" height="100"><path d="M1 6H10L5.500 1Z M1 90H10L5.500 95Z" fill="#33394f"/><path d="M2 31H9M2 34H9M2 37H9" stroke="#777"/></svg>
</div>

<div class="t" style="left:1273px;top:651px;font-size:13.5px">Material above:</div>
<div class="cb" style="left:1271px;top:670px;width:316px;height:24px;font-size:13.5px;padding-left:2px;letter-spacing:-.12px">03 - Aggregate Sub Base ▸ Earthen (Select)</div>
<svg style="left:1570px;top:678px" width="12" height="8"><path d="M1 1L6 6.500L11 1" fill="none" stroke="#444"/></svg>
<div class="btn" style="left:1385px;top:745px;width:98px;height:26px;font-size:13.5px">Save</div>
<div class="btn" style="left:1493px;top:745px;width:98px;height:26px;font-size:13.5px">Cancel</div>
<div class="btn" style="left:1510px;top:808px;width:105px;height:25px;background:#e6e6e6;border:1px solid #a3a3a3;box-shadow:inset 0 0 0 2px #f0f0f0;font-size:13.5px">Close</div>

<!-- edit panel scroll -->
<div class="b" style="left:1599px;top:53px;width:19px;height:747px;background:#f7f7fb"></div>
<div class="b" style="left:1599px;top:54px;width:19px;height:21px;background:#cfd0d5"></div>
<div class="b" style="left:1599px;top:113px;width:19px;height:592px;background:#cdced3;border:1px solid #a8a8a8"></div>
<div class="b" style="left:1599px;top:779px;width:19px;height:21px;background:#cfd0d5"></div>
<svg style="left:1604px;top:61px" width="10" height="734"><path d="M0 7H9L4.500 1Z M0 727H9L4.500 733Z" fill="#33394f"/><path d="M1.500 345H8M1.500 347.500H8M1.500 350H8" stroke="#777"/></svg>

<!-- status bar -->
<div class="b" style="left:0;top:840px;width:1619px;height:1px;background:#d5d5d5"></div>
<div class="b" style="left:0;top:841px;width:1619px;height:28px;background:#f0f0f0"></div>
<div class="y" style="left:950px"></div><div class="y" style="left:1010px"></div><div class="y" style="left:1030px"></div><div class="y" style="left:1050px"></div>
<svg style="left:950px;top:841px" width="140" height="28">
<rect x="4" y="8" width="12" height="11" fill="none" stroke="#555" stroke-width="1.200"/><circle cx="14.500" cy="19" r="3.800" fill="#1a97e6"/>
<path d="M22 14L29 8L35 12L33 20H24Z" fill="none" stroke="#888" stroke-width="1.200"/><circle cx="34" cy="20" r="3.800" fill="#1a97e6"/>
<rect x="43" y="8" width="14" height="14" fill="#9a9ab8" stroke="#33394f" stroke-width="1.500"/><path d="M43 22L57 8V22Z" fill="#33394f" opacity=".6"/>
<path d="M62 8H77M62 13H77M62 18H77M65 5V22M70 5V22M75 5V22" stroke="#a28a4a" stroke-width=".8"/>
<path d="M84 21L94 9" stroke="#333" stroke-width="1.200"/><circle cx="84" cy="21" r="2" fill="#333"/><text x="82" y="13" font-size="8">a</text><circle cx="94" cy="20" r="3.800" fill="#1a97e6"/>
<path d="M103 18L110 10L113 14M110 22L117 14" stroke="#333" stroke-width="1.200" fill="none"/>
<path d="M124 8V22H137M124 15H130V22" stroke="#444" fill="none"/>
</svg>
<div class="sep" style="left:969px"></div><div class="sep" style="left:988px"></div><div class="sep" style="left:1089px"></div><div class="sep" style="left:1129px"></div><div class="sep" style="left:1150px"></div><div class="sep" style="left:1193px"></div><div class="sep" style="left:1227px"></div><div class="sep" style="left:1284px"></div><div class="sep" style="left:1305px"></div><div class="sep" style="left:1325px"></div><div class="sep" style="left:1344px"></div><div class="sep" style="left:1597px"></div>
<div class="t" style="left:1095px;top:849px;font-size:13.5px;letter-spacing:0">Snap</div>
<svg style="left:1134px;top:847px" width="16" height="16"><rect x="0" y="0" width="14" height="11" fill="#2f3452"/><path d="M3 3H7V7H3ZM9 2H12V6H9Z" fill="#ddd"/><circle cx="12" cy="12" r="3.500" fill="#1a97e6"/></svg>
<div class="t" style="left:1155px;top:849px;font-size:13.5px;letter-spacing:-.1px">Meter</div>
<div class="t" style="left:1198px;top:849px;font-size:13.5px;letter-spacing:0">Grid</div>
<div class="t st" style="left:1232px;top:849px;font-size:13.5px">Zone 56</div>
<div class="t" style="left:1310px;top:849px;font-size:13.5px">0</div>
<svg style="left:1328px;top:847px" width="16" height="17"><rect x="1.500" y="5.500" width="9" height="10" fill="none" stroke="#111" stroke-width="1.200"/><path d="M0 2H12M13.500 5V16" stroke="#0a8a1a" stroke-width="1.200"/></svg>
<div class="t st" style="left:1350px;top:849px;font-size:13.5px">10.234 m,6.964 m</div>
<svg style="left:1603px;top:847px" width="14" height="17"><path d="M0 2H9M0 5H9M0 8H9M0 11H7" stroke="#222" stroke-width="1.500"/><circle cx="10" cy="13" r="3.500" fill="#1a97e6"/></svg>

<!-- red arrows -->
<svg style="left:0;top:0" width="1619" height="869">
<g fill="none" stroke="#ed1c24" stroke-width="7" stroke-linejoin="round">
<path d="M572.500 292.500H628.500V366H656L602 437L546 366H572.500Z"/>
<path d="M1161 128H1085V163H1161V181L1236 146L1161 110Z"/>
<path d="M1161 231H1085V266H1161V283L1236 247L1161 212Z"/>
<path d="M1163 589H1089V620H1163V640L1231 605L1163 575Z"/>
<path d="M1165 676H1099V704H1165V725L1231 688L1165 659Z"/>
</g></svg>
</body></html>
